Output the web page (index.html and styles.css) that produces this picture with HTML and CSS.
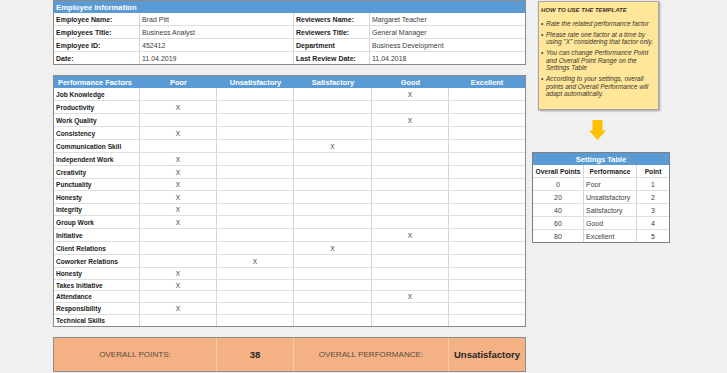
FILE: index.html
```html
<!DOCTYPE html>
<html lang="en">
<head>
<meta charset="utf-8">
<title>Employee Performance Review</title>
<link rel="stylesheet" href="styles.css">
</head>
<body>
<div class="sheet">
  <main class="main-col">
    <section class="info">
      <div class="info-head">Employee Information</div>
      <div class="c lbl">Employee Name:</div><div class="c val">Brad Pitt</div><div class="c lbl">Reviewers Name:</div><div class="c val">Margaret Teacher</div>
      <div class="c lbl">Employees Title:</div><div class="c val">Business Analyst</div><div class="c lbl">Reviewers Title:</div><div class="c val">General Manager</div>
      <div class="c lbl">Employee ID:</div><div class="c val">452412</div><div class="c lbl">Department</div><div class="c val">Business Development</div>
      <div class="c lbl">Date:</div><div class="c val">11.04.2019</div><div class="c lbl">Last Review Date:</div><div class="c val">11.04.2018</div>
    </section>

    <section class="perf">
      <div class="ph ph-first">Performance Factors</div><div class="ph">Poor</div><div class="ph">Unsatisfactory</div><div class="ph">Satisfactory</div><div class="ph">Good</div><div class="ph">Excellent</div>
      <div class="c fac">Job Knowledge</div><div class="c mk"></div><div class="c mk"></div><div class="c mk"></div><div class="c mk">X</div><div class="c mk"></div>
      <div class="c fac">Productivity</div><div class="c mk">X</div><div class="c mk"></div><div class="c mk"></div><div class="c mk"></div><div class="c mk"></div>
      <div class="c fac">Work Quality</div><div class="c mk"></div><div class="c mk"></div><div class="c mk"></div><div class="c mk">X</div><div class="c mk"></div>
      <div class="c fac">Consistency</div><div class="c mk">X</div><div class="c mk"></div><div class="c mk"></div><div class="c mk"></div><div class="c mk"></div>
      <div class="c fac">Communication Skill</div><div class="c mk"></div><div class="c mk"></div><div class="c mk">X</div><div class="c mk"></div><div class="c mk"></div>
      <div class="c fac">Independent Work</div><div class="c mk">X</div><div class="c mk"></div><div class="c mk"></div><div class="c mk"></div><div class="c mk"></div>
      <div class="c fac">Creativity</div><div class="c mk">X</div><div class="c mk"></div><div class="c mk"></div><div class="c mk"></div><div class="c mk"></div>
      <div class="c fac">Punctuality</div><div class="c mk">X</div><div class="c mk"></div><div class="c mk"></div><div class="c mk"></div><div class="c mk"></div>
      <div class="c fac">Honesty</div><div class="c mk">X</div><div class="c mk"></div><div class="c mk"></div><div class="c mk"></div><div class="c mk"></div>
      <div class="c fac">Integrity</div><div class="c mk">X</div><div class="c mk"></div><div class="c mk"></div><div class="c mk"></div><div class="c mk"></div>
      <div class="c fac">Group Work</div><div class="c mk">X</div><div class="c mk"></div><div class="c mk"></div><div class="c mk"></div><div class="c mk"></div>
      <div class="c fac">Initiative</div><div class="c mk"></div><div class="c mk"></div><div class="c mk"></div><div class="c mk">X</div><div class="c mk"></div>
      <div class="c fac">Client Relations</div><div class="c mk"></div><div class="c mk"></div><div class="c mk">X</div><div class="c mk"></div><div class="c mk"></div>
      <div class="c fac">Coworker Relations</div><div class="c mk"></div><div class="c mk">X</div><div class="c mk"></div><div class="c mk"></div><div class="c mk"></div>
      <div class="c fac">Honesty</div><div class="c mk">X</div><div class="c mk"></div><div class="c mk"></div><div class="c mk"></div><div class="c mk"></div>
      <div class="c fac">Takes Initiative</div><div class="c mk">X</div><div class="c mk"></div><div class="c mk"></div><div class="c mk"></div><div class="c mk"></div>
      <div class="c fac">Attendance</div><div class="c mk"></div><div class="c mk"></div><div class="c mk"></div><div class="c mk">X</div><div class="c mk"></div>
      <div class="c fac">Responsibility</div><div class="c mk">X</div><div class="c mk"></div><div class="c mk"></div><div class="c mk"></div><div class="c mk"></div>
      <div class="c fac">Technical Skills</div><div class="c mk"></div><div class="c mk"></div><div class="c mk"></div><div class="c mk"></div><div class="c mk"></div>
    </section>

    <section class="summary">
      <div class="s-cell s-label">OVERALL POINTS:</div>
      <div class="s-cell s-value">38</div>
      <div class="s-cell s-label">OVERALL PERFORMANCE:</div>
      <div class="s-cell s-value">Unsatisfactory</div>
    </section>
  </main>

  <aside class="side-col">
    <div class="note">
      <div class="note-title">HOW TO USE THE TEMPLATE</div>
      <ul class="note-list">
        <li><span>Rate the related performance factor</span></li>
        <li><span>Please rate one factor at a time by<br>using &quot;X&quot; considering that factor only.</span></li>
        <li><span>You can change Performance Point<br>and Overall Point Range on the<br>Settings Table</span></li>
        <li><span>According to your settings, overall<br>points and Overall Performance will<br>adapt automatically.</span></li>
      </ul>
    </div>

    <svg class="arrow" width="17" height="20" viewBox="0 0 17 20" aria-hidden="true">
      <polygon points="3.5,0 13.5,0 13.5,10.5 17,10.5 8.5,20 0,10.5 3.5,10.5" fill="#ffc000"/>
    </svg>

    <section class="settings">
      <div class="st-head">Settings Table</div>
      <div class="c st-col">Overall Points</div><div class="c st-col">Performance</div><div class="c st-col">Point</div>
      <div class="c num">0</div><div class="c txt">Poor</div><div class="c num">1</div>
      <div class="c num">20</div><div class="c txt">Unsatisfactory</div><div class="c num">2</div>
      <div class="c num">40</div><div class="c txt">Satisfactory</div><div class="c num">3</div>
      <div class="c num">60</div><div class="c txt">Good</div><div class="c num">4</div>
      <div class="c num">80</div><div class="c txt">Excellent</div><div class="c num">5</div>
    </section>
  </aside>
</div>
</body>
</html>
```

FILE: styles.css
```css
* {
  box-sizing: border-box;
}

html,
body {
  margin: 0;
  padding: 0;
}

body {
  width: 727px;
  height: 373px;
  overflow: hidden;
  background: #f0f0f0;
  font-family: "Liberation Sans", Arial, sans-serif;
  color: #262626;
}

.sheet {
  display: flex;
  align-items: flex-start;
  gap: 6px;
  padding-left: 53px;
}

.main-col {
  width: 473px;
  display: flex;
  flex-direction: column;
}

/* shared cell */
.c {
  display: flex;
  align-items: center;
  white-space: nowrap;
  border-right: 1px solid #d6d6d6;
  border-bottom: 1px solid #dedede;
}

/* ---------- Employee information ---------- */
.info {
  display: grid;
  grid-template-columns: 86px 154px 76px 1fr;
  grid-template-rows: 12px 13px 13px 13px 12px;
  background: #fff;
  border: 1px solid #8a8a8a;
}

.info-head {
  grid-column: 1 / -1;
  display: flex;
  align-items: center;
  padding-left: 2px;
  background: #5b9bd5;
  color: #fff;
  font-weight: bold;
  font-size: 7.7px;
  white-space: nowrap;
}

.info .c {
  font-size: 7px;
  padding-left: 2px;
}

.info .c:nth-child(4n + 1) {
  border-right: 0;
}

.info .c:nth-last-child(-n + 4) {
  border-bottom: 0;
}

.lbl {
  font-weight: bold;
  color: #1a1a1a;
}

.val {
  color: #3d3d3d;
}

/* ---------- Performance factors ---------- */
.perf {
  margin-top: 10px;
  display: grid;
  grid-template-columns: 86px 77px 77px 78px 77px 1fr;
  grid-template-rows: 12px repeat(7, 13px) 12px 13px 12px repeat(4, 13px) 12px 11px 12px 12px 11px;
  background: #fff;
  border: 1px solid #8a8a8a;
}

.ph {
  display: flex;
  align-items: center;
  justify-content: center;
  background: #5b9bd5;
  color: #fff;
  font-weight: bold;
  font-size: 7.4px;
  white-space: nowrap;
}

.ph-first {
  justify-content: flex-start;
  padding-left: 4px;
}

.perf .c {
  font-size: 6.6px;
}

.perf .c:nth-child(6n) {
  border-right: 0;
}

.perf .c:nth-last-child(-n + 6) {
  border-bottom: 0;
}

.fac {
  padding-left: 2px;
  font-weight: bold;
  color: #1a1a1a;
}

.mk {
  justify-content: center;
  color: #3a3a3a;
}

/* ---------- Summary bar ---------- */
.summary {
  margin-top: 10px;
  height: 35px;
  display: grid;
  grid-template-columns: 163px 77px 155px 1fr;
  background: #f4b183;
  border: 1px solid #8c8c8c;
}

.s-cell {
  display: flex;
  align-items: center;
  justify-content: center;
  white-space: nowrap;
  border-right: 1px solid #f8cbad;
}

.s-cell:last-child {
  border-right: 0;
}

.s-label {
  font-size: 8.1px;
  color: #5a4c44;
}

.s-value {
  font-size: 9.5px;
  font-weight: bold;
  color: #262626;
}

/* ---------- Side column ---------- */
.side-col {
  width: 138px;
  display: flex;
  flex-direction: column;
}

.note {
  margin: 1px 0 0 6px;
  width: 121px;
  height: 109px;
  padding: 4.5px 1px 0 2px;
  background: #ffe699;
  border: 1px solid #a6a6a6;
  box-shadow: 1px 1px 2px rgba(0, 0, 0, 0.35);
  font-style: italic;
  color: #3a3530;
}

.note-title {
  font-weight: bold;
  font-size: 6px;
  line-height: 7.5px;
  white-space: nowrap;
}

.note-list {
  list-style: none;
  margin: 5.5px 0 0;
  padding: 0;
}

.note-list li {
  display: flex;
  margin-top: 3.5px;
  font-size: 6.5px;
  line-height: 7.5px;
  white-space: nowrap;
}

.note-list li::before {
  content: "\2022";
  flex: none;
  width: 5px;
  font-style: normal;
}

.arrow {
  display: block;
  margin: 10px 0 0 57px;
}

/* ---------- Settings table ---------- */
.settings {
  margin-top: 12px;
  display: grid;
  grid-template-columns: 51px 53px 1fr;
  grid-template-rows: 12px 13px 13px 13px 13px 13px 12px;
  background: #fff;
  border: 1px solid #7f7f7f;
}

.st-head {
  grid-column: 1 / -1;
  display: flex;
  align-items: center;
  justify-content: center;
  background: #5b9bd5;
  color: #fff;
  font-weight: bold;
  font-size: 7.5px;
}

.settings .c:nth-child(3n + 1) {
  border-right: 0;
}

.settings .c:nth-last-child(-n + 3) {
  border-bottom: 0;
}

.st-col {
  justify-content: center;
  font-weight: bold;
  font-size: 6.7px;
  color: #1a1a1a;
}

.num {
  justify-content: center;
  font-size: 7px;
  color: #3d3d3d;
}

.txt {
  padding-left: 2px;
  font-size: 7px;
  color: #3d3d3d;
}
```
